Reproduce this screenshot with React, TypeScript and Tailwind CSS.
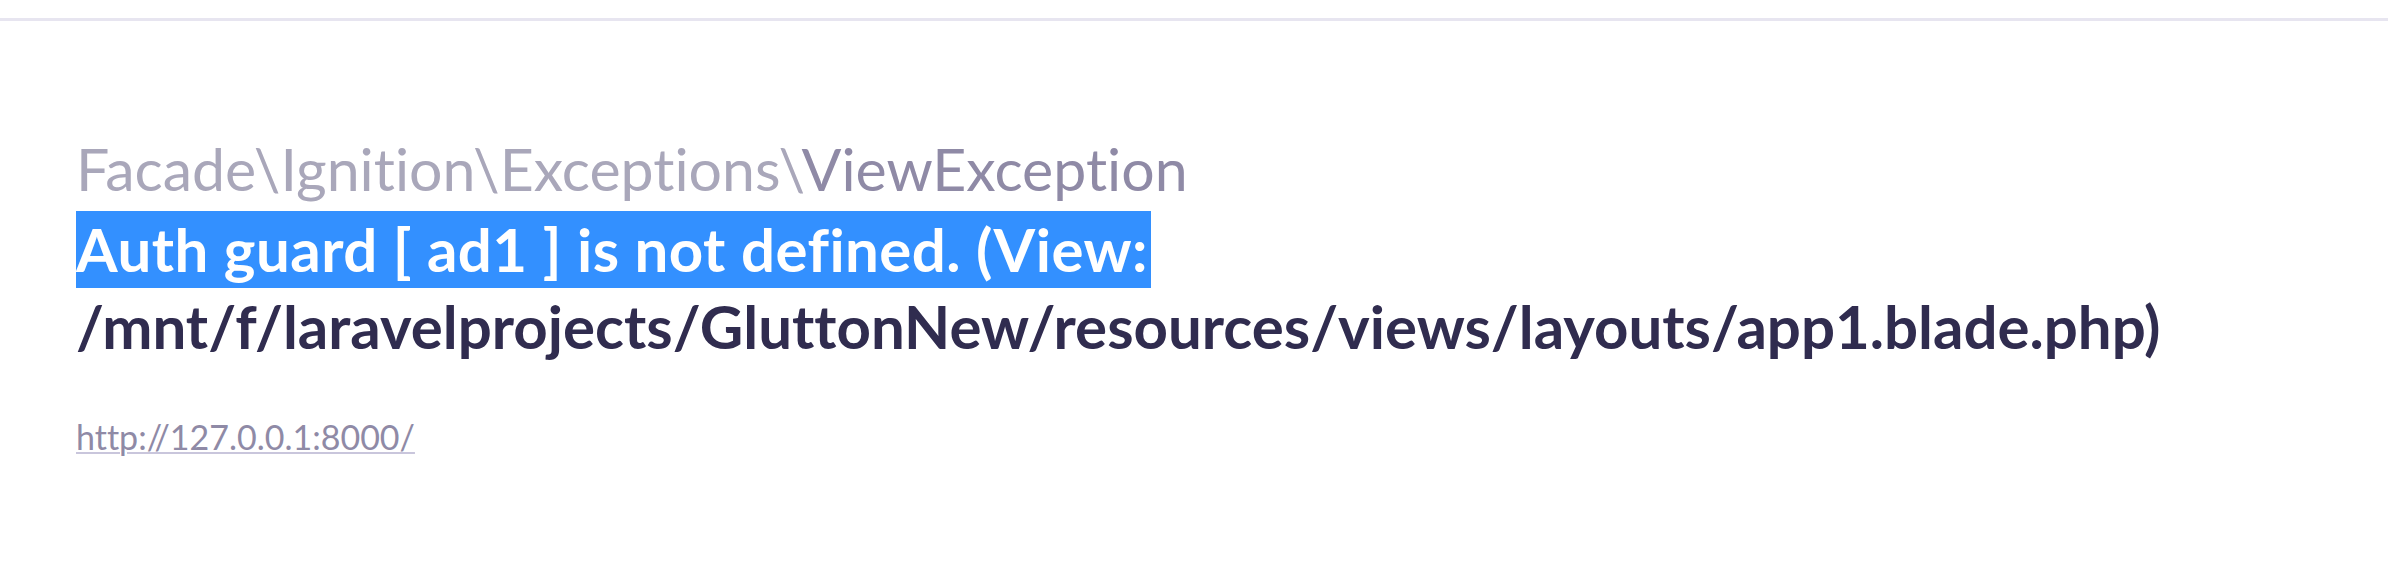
export default function App() {
  return (
    <div className="min-h-[576px] bg-white font-['Lato',sans-serif] [font-variant-ligatures:none]">
      <div className="h-[21px] border-b-[3px] border-[#e7e5f0]" />

      <div className="pl-[76px] pt-[109px]">
        <div className="whitespace-nowrap text-[59px] leading-[77px] text-[#a9a7ba]">
          Facade\Ignition\Exceptions\<span className="text-[#8f8aa6]">ViewException</span>
        </div>

        <div className="mt-1 text-[60px] font-bold leading-[77px] text-[#302c4f]">
          <span className="inline-block bg-[#3390ff] pr-[3px] tracking-[0.45px] text-white">
            Auth guard [ ad1 ] is not defined. (View:
          </span>
          <div className="whitespace-nowrap">
            /mnt/f/laravelprojects/GluttonNew/resources/views/layouts/app1.blade.php)
          </div>
        </div>

        <a
          href="#"
          className="mt-[46px] inline-block text-[34px] leading-[51px] text-[#8f8aa6] underline decoration-[#c9c6dc] decoration-2 underline-offset-[2px]"
        >
          http://127.0.0.1:8000/
        </a>
      </div>
    </div>
  );
}
